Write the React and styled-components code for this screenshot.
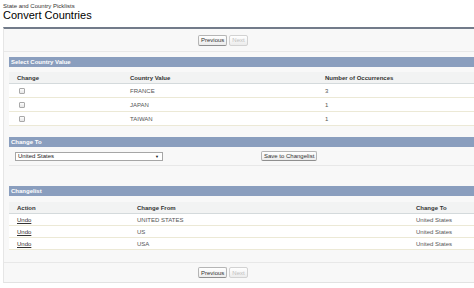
import React from 'react';
import styled, { createGlobalStyle } from 'styled-components';

const GlobalStyle = createGlobalStyle`
  html, body {
    margin: 0;
    padding: 0;
    background: #ffffff;
    overflow: hidden;
  }
  body {
    font-family: "Liberation Sans", Arial, sans-serif;
    color: #333;
  }
`;

const Page = styled.div`
  width: 490px;
  padding: 3px 0 0 3px;
`;

const Breadcrumb = styled.div`
  font-size: 6px;
  line-height: 6px;
  color: #333;
`;

const Title = styled.h1`
  margin: 0;
  font-size: 11px;
  line-height: 12px;
  font-weight: normal;
  color: #000;
`;

const Panel = styled.div`
  margin-top: 6px;
  background: #f8f8f8;
  border-top: 2px solid #727b8a;
  border-left: 1px solid #e6e6e6;
  border-bottom: 1px solid #e2e2e2;
  padding: 0 0 0 5px;
`;

const Pager = styled.div`
  display: flex;
  align-items: center;
  gap: 2px;
  height: ${p => p.$h}px;
  padding-left: 194px;
  border-top: ${p => (p.$bottom ? '1px solid #e8e8e8' : 'none')};
  border-bottom: ${p => (p.$bottom ? 'none' : '1px solid #e8e8e8')};
  margin-top: ${p => (p.$bottom ? 12 : 0)}px;
  margin-left: -5px;
`;

const Button = styled.button`
  font-family: "Liberation Sans", Arial, sans-serif;
  font-size: 6px;
  height: ${p => p.$h || 11}px;
  line-height: 8px;
  padding: 0 2px;
  border: 1px solid #b5b5b5;
  border-bottom-color: #8f8f8f;
  border-radius: 2px;
  background: linear-gradient(#ffffff, #ececec);
  color: ${p => (p.disabled ? '#c0c0c0' : '#333')};
  ${p => p.disabled && 'border-color: #d2d2d2;'}
`;

const SectionHeader = styled.div`
  margin-top: ${p => p.$mt}px;
  height: 10px;
  line-height: 10px;
  background: #8a9ebe;
  color: #ffffff;
  font-size: 6px;
  font-weight: bold;
  padding-left: 2px;
`;

const Table = styled.table`
  margin-top: ${p => p.$mt}px;
  width: 100%;
  border-collapse: collapse;
  background: #ffffff;
  font-size: 6px;
`;

const Th = styled.th`
  width: ${p => (p.$w ? `${p.$w}px` : 'auto')};
  height: 11px;
  padding: 0 0 0 8px;
  text-align: left;
  font-weight: bold;
  color: #333;
  background: #f2f3f3;
  border-bottom: 1px solid #d4dadc;
`;

const Td = styled.td`
  height: ${p => p.$h}px;
  padding: 0 0 0 8px;
  color: #555;
  border-bottom: 1px solid #ece9d6;
  vertical-align: middle;
`;

const Check = styled.input`
  appearance: none;
  display: block;
  margin: 0 0 0 2px;
  width: 6px;
  height: 6px;
  border: 1px solid #a9a9a9;
  border-radius: 1px;
  background: linear-gradient(#fdfdfd, #e6e6e6);
`;

const SelectRow = styled.div`
  display: flex;
  align-items: center;
  height: 18px;
  padding-left: 6px;
  border-bottom: 1px solid #e8e8e8;
`;

const Select = styled.div`
  display: flex;
  align-items: center;
  justify-content: space-between;
  box-sizing: border-box;
  width: 148px;
  height: 9px;
  padding: 0 3px 0 2px;
  background: #ffffff;
  border: 1px solid #a6a6a6;
  font-size: 6px;
  color: #222;
`;

const Arrow = styled.span`
  font-size: 4px;
  color: #111;
`;

const SaveButton = styled(Button)`
  margin-left: 98px;
`;

const UndoLink = styled.a`
  color: #333;
  text-decoration: underline;
`;

const countries = [
  { name: 'FRANCE', count: 3 },
  { name: 'JAPAN', count: 1 },
  { name: 'TAIWAN', count: 1 },
];

const changes = [
  { from: 'UNITED STATES', to: 'United States' },
  { from: 'US', to: 'United States' },
  { from: 'USA', to: 'United States' },
];

export default function App() {
  return (
    <Page>
      <GlobalStyle />
      <Breadcrumb>State and Country Picklists</Breadcrumb>
      <Title>Convert Countries</Title>
      <Panel>
        <Pager $h={22}>
          <Button>Previous</Button>
          <Button disabled>Next</Button>
        </Pager>

        <SectionHeader $mt={5}>Select Country Value</SectionHeader>
        <Table $mt={5}>
          <thead>
            <tr>
              <Th $w={105}>Change</Th>
              <Th $w={187}>Country Value</Th>
              <Th>Number of Occurrences</Th>
            </tr>
          </thead>
          <tbody>
            {countries.map(c => (
              <tr key={c.name}>
                <Td $h={13}><Check type="checkbox" /></Td>
                <Td $h={13}>{c.name}</Td>
                <Td $h={13}>{c.count}</Td>
              </tr>
            ))}
          </tbody>
        </Table>

        <SectionHeader $mt={11}>Change To</SectionHeader>
        <SelectRow>
          <Select>
            <span>United States</span>
            <Arrow>▼</Arrow>
          </Select>
          <SaveButton $h={10}>Save to Changelist</SaveButton>
        </SelectRow>

        <SectionHeader $mt={20}>Changelist</SectionHeader>
        <Table $mt={6}>
          <thead>
            <tr>
              <Th $w={112}>Action</Th>
              <Th $w={271}>Change From</Th>
              <Th>Change To</Th>
            </tr>
          </thead>
          <tbody>
            {changes.map(c => (
              <tr key={c.from}>
                <Td $h={11}><UndoLink href="#">Undo</UndoLink></Td>
                <Td $h={11}>{c.from}</Td>
                <Td $h={11}>{c.to}</Td>
              </tr>
            ))}
          </tbody>
        </Table>

        <Pager $h={19} $bottom>
          <Button>Previous</Button>
          <Button disabled>Next</Button>
        </Pager>
      </Panel>
    </Page>
  );
}
